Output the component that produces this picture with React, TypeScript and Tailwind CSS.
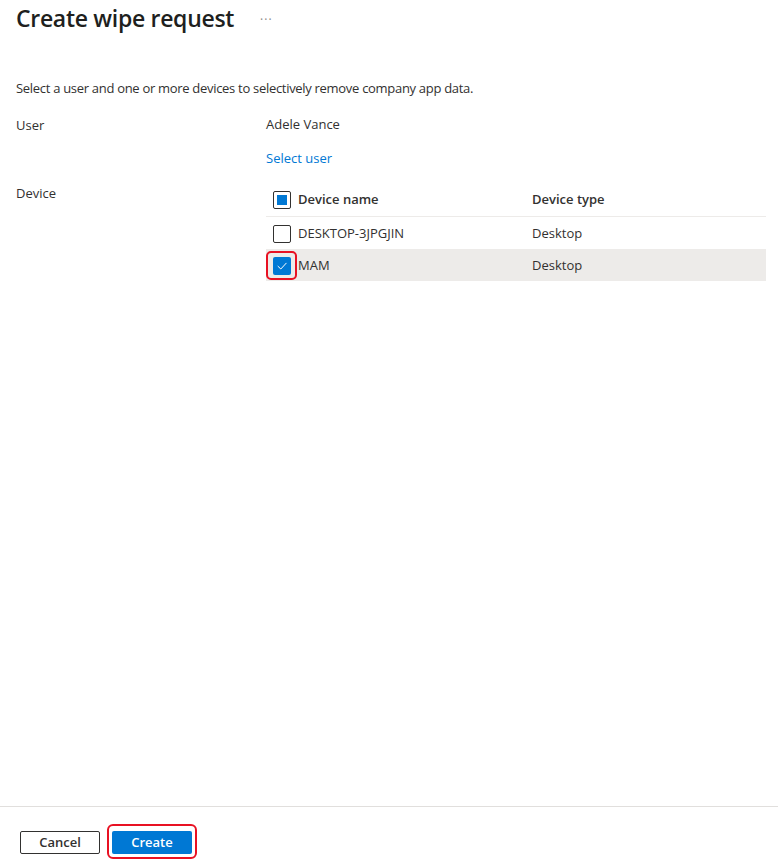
import React from "react";

function Check({ checked, partial }: { checked?: boolean; partial?: boolean }) {
  if (checked) {
    return (
      <span className="flex h-[18px] w-[18px] items-center justify-center rounded-[2px] bg-[#0078d4]">
        <svg width="12" height="12" viewBox="0 0 12 12" fill="none">
          <path d="M2 6.3 L4.8 9 L10.2 3.2" stroke="white" strokeWidth="1" strokeLinecap="round" strokeLinejoin="round" />
        </svg>
      </span>
    );
  }
  return (
    <span className="flex h-[18px] w-[18px] items-center justify-center rounded-[2px] border border-[#323130] bg-white">
      {partial && <span className="h-[10px] w-[10px] bg-[#0078d4]" />}
    </span>
  );
}

export default function App() {
  return (
    <div
      className="flex h-[866px] w-[778px] flex-col bg-white text-[#323130]"
      style={{ fontFamily: '"Open Sans", "Noto Sans", sans-serif' }}
    >
      <div className="flex-1 px-4">
        <div className="flex items-center pt-[2px]">
          <h1 className="text-[23px] font-semibold leading-[32px] tracking-[-0.3px] text-[#201f1e]">Create wipe request</h1>
          <span className="ml-[26px] mt-[3px] text-[12px] tracking-[1px] text-[#8a8886]">···</span>
        </div>
        <p className="mt-[45px] text-[13px] leading-[18px] tracking-[-0.3px]">
          Select a user and one or more devices to selectively remove company app data.
        </p>
        <div className="mt-[19px] flex">
          <div className="w-[250px] text-[13px] leading-[18px]">User</div>
          <div className="text-[13px] leading-[18px]">
            <div className="mt-[-1px]">Adele Vance</div>
            <div className="mt-[16px] text-[#0078d4]">Select user</div>
          </div>
        </div>
        <div className="mt-[17px] flex">
          <div className="w-[250px] text-[13px] leading-[18px]">Device</div>
          <div className="mr-[-4px] mt-[-10px] flex-1 pt-[9px]">
            <div className="flex h-[34px] items-center border-b border-[#edebe9] text-[13px] font-semibold">
              <span className="flex w-[32px] justify-center"><Check partial /></span>
              <span className="w-[234px]">Device name</span>
              <span>Device type</span>
            </div>
            <div className="flex h-[32px] items-center pt-[1px] text-[13px]">
              <span className="flex w-[32px] justify-center"><Check /></span>
              <span className="w-[234px]">DESKTOP-3JPGJIN</span>
              <span>Desktop</span>
            </div>
            <div className="flex h-[32px] items-center pt-[1px] bg-[#edebe9] text-[13px]">
              <span className="relative flex w-[32px] justify-center">
                <Check checked />
                <span className="absolute left-0 top-[-6px] h-[29px] w-[31px] rounded-[5px] border-2 border-[#e81123]" />
              </span>
              <span className="w-[234px]">MAM</span>
              <span>Desktop</span>
            </div>
          </div>
        </div>
      </div>
      <div className="flex h-[60px] items-start gap-[12px] border-t border-[#e1dfdd] px-[20px] pt-[24px]">
        <button className="h-[23px] w-[80px] rounded-[2px] border border-[#323130] bg-white text-[13px] font-semibold leading-none text-[#323130]">
          Cancel
        </button>
        <span className="relative flex">
          <button className="h-[23px] w-[80px] rounded-[2px] bg-[#0078d4] text-[13px] font-semibold leading-none text-white">
            Create
          </button>
          <span className="absolute left-[-5px] top-[-7px] h-[35px] w-[90px] rounded-[6px] border-2 border-[#e81123]" />
        </span>
      </div>
    </div>
  );
}
